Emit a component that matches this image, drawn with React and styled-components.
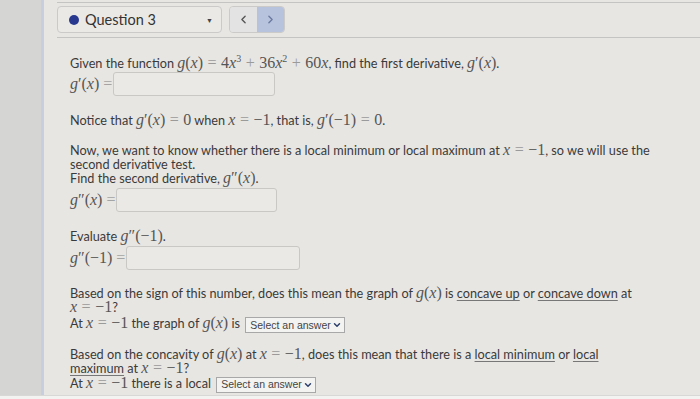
import React from "react";
import styled, { createGlobalStyle } from "styled-components";
import { ChevronDown, ChevronLeft, ChevronRight } from "lucide-react";

const GlobalStyle = createGlobalStyle`
  html, body {
    margin: 0;
    padding: 0;
  }
  body {
    font-family: Lato, "Open Sans", sans-serif;
    background: #f1f1f0;
  }
`;

const Screen = styled.div`
  width: 700px;
  height: 399px;
  display: flex;
  flex-direction: column;
  overflow: hidden;
`;

const Body = styled.div`
  height: 395px;
  display: flex;
`;

const BottomStrip = styled.div`
  flex: 1;
  background: #f3f3f2;
  border-top: 1px solid #d8d8d6;
`;

const Gutter = styled.div`
  width: 41px;
  background: #d5d5d3;
`;

const Divider = styled.div`
  width: 3px;
  background: #c7cedf;
`;

const Main = styled.div`
  flex: 1;
  background: #e8e6e2;
  padding-left: 13px;
`;

const Header = styled.div`
  margin-top: 2px;
  border-top: 1px solid #c4c4c2;
  border-bottom: 1px solid #c4c4c2;
  padding: 3px 0 4px;
  display: flex;
  gap: 7px;
`;

const QuestionBox = styled.div`
  width: 165px;
  height: 27px;
  box-sizing: border-box;
  border: 1px solid #cbcac8;
  border-radius: 4px;
  background: #ebe9e6;
  display: flex;
  align-items: center;
  padding: 0 8px 0 11px;
  color: #333;
  font-size: 14.5px;
`;

const Dot = styled.span`
  width: 10px;
  height: 10px;
  border-radius: 50%;
  background: #27388e;
  margin-right: 6px;
`;

const Caret = styled.span`
  margin-left: auto;
  font-size: 7px;
  color: #444;
`;

const NavGroup = styled.div`
  display: flex;
  height: 27px;
  box-sizing: border-box;
  border: 1px solid #cbcac8;
  border-radius: 4px;
  overflow: hidden;
`;

const NavButton = styled.div`
  width: 27px;
  display: flex;
  align-items: center;
  justify-content: center;
  background: ${(p) => (p.$active ? "#b7c2dc" : "#e3e3e4")};
  color: ${(p) => (p.$active ? "#6b7ba0" : "#555")};
`;

const Content = styled.div`
  padding-left: 13px;
  width: 580px;
  color: #3a3a3a;
  font-size: 12.7px;
`;

const Para = styled.p`
  margin: ${(p) => p.$top || 0}px 0 0;
  line-height: ${(p) => p.$lh || 14}px;
`;

const AtLine = styled.div`
  margin-top: ${(p) => p.$top ?? 1}px;
  line-height: 16px;
`;

const M = styled.span`
  font-family: "Liberation Serif", "DejaVu Serif", serif;
  font-size: 16px;
  line-height: 0;
  color: #555;
  white-space: nowrap;
`;

const Label = styled(M)`
  line-height: 24px;
`;

const I = styled.i`
  font-style: italic;
`;

const Sup = styled.sup`
  font-size: 10px;
  vertical-align: 6px;
  line-height: 0;
`;

const Op = styled.span`
  color: #9a9a9a;
  margin: 0 4.5px;
`;

const AnswerRow = styled.div`
  display: flex;
  align-items: center;
  margin-top: ${(p) => p.$top || 0}px;
  height: 24px;
`;

const Eq = styled.span`
  font-family: "Liberation Serif", serif;
  font-size: 16px;
  color: #a4a4a4;
  margin: 0 1px 0 4px;
`;

const AnswerBox = styled.div`
  width: ${(p) => p.$w}px;
  height: 24px;
  box-sizing: border-box;
  border: 1px solid #c9c8c5;
  border-radius: 3px;
  background: #ebe9e6;
`;

const Term = styled.span`
  text-decoration: underline;
  text-underline-offset: 2px;
  text-decoration-color: #777;
`;

const Select = styled.span`
  display: inline-flex;
  align-items: center;
  height: 16px;
  box-sizing: border-box;
  border: 1px solid #a8a8a8;
  background: #f3f3f2;
  padding: 0 2px 0 4px;
  font-family: "Liberation Sans", Arial, sans-serif;
  font-size: 10.5px;
  line-height: 1;
  color: #444;
  vertical-align: middle;
  margin-left: 2px;
  gap: 1px;
`;

const X = () => <I>x</I>;

const Gx = ({ p = "" }) => (
  <>
    <I>g</I>
    {p}(<X />)
  </>
);

const AtX = () => (
  <M>
    <X />
    <Op>=</Op>−1
  </M>
);

const Dropdown = () => (
  <Select>
    Select an answer
    <ChevronDown size={10} strokeWidth={3.5} color="#2c3e6a" />
  </Select>
);

export default function App() {
  return (
    <Screen>
      <GlobalStyle />
      <Body>
        <Gutter />
        <Divider />
        <Main>
          <Header>
            <QuestionBox>
              <Dot />
              Question 3
              <Caret>▼</Caret>
            </QuestionBox>
            <NavGroup>
              <NavButton>
                <ChevronLeft size={13} strokeWidth={2.5} />
              </NavButton>
              <NavButton $active>
                <ChevronRight size={13} strokeWidth={2.5} />
              </NavButton>
            </NavGroup>
          </Header>

          <Content>
            <Para $top={16} $lh={18}>
              Given the function{" "}
              <M>
                <Gx />
                <Op>=</Op>4<X />
                <Sup>3</Sup>
                <Op>+</Op>36<X />
                <Sup>2</Sup>
                <Op>+</Op>60<X />
              </M>
              , find the first derivative,{" "}
              <M>
                <Gx p="′" />
              </M>
              .
            </Para>
            <AnswerRow>
              <Label>
                <Gx p="′" />
              </Label>
              <Eq>=</Eq>
              <AnswerBox $w={162} />
            </AnswerRow>

            <Para $top={15} $lh={18}>
              Notice that{" "}
              <M>
                <Gx p="′" />
                <Op>=</Op>0
              </M>{" "}
              when <AtX />, that is,{" "}
              <M>
                <I>g</I>′(−1)<Op>=</Op>0
              </M>
              .
            </Para>

            <Para $top={14}>
              Now, we want to know whether there is a local minimum or local
              maximum at <AtX />, so we will use the second derivative test.
              <br />
              Find the second derivative,{" "}
              <M>
                <Gx p="″" />
              </M>
              .
            </Para>
            <AnswerRow $top={3}>
              <Label>
                <Gx p="″" />
              </Label>
              <Eq>=</Eq>
              <AnswerBox $w={161} />
            </AnswerRow>

            <Para $top={15} $lh={18}>
              Evaluate{" "}
              <M>
                <I>g</I>″(−1)
              </M>
              .
            </Para>
            <AnswerRow $top={1}>
              <Label>
                <I>g</I>″(−1)
              </Label>
              <Eq>=</Eq>
              <AnswerBox $w={174} />
            </AnswerRow>

            <Para $top={16}>
              Based on the sign of this number, does this mean the graph of{" "}
              <M>
                <Gx />
              </M>{" "}
              is <Term>concave up</Term> or <Term>concave down</Term> at{" "}
              <AtX />?
            </Para>
            <AtLine>
              At <AtX /> the graph of{" "}
              <M>
                <Gx />
              </M>{" "}
              is <Dropdown />
            </AtLine>

            <Para $top={14}>
              Based on the concavity of{" "}
              <M>
                <Gx />
              </M>{" "}
              at <AtX />, does this mean that there is a{" "}
              <Term>local minimum</Term> or <Term>local maximum</Term> at{" "}
              <AtX />?
            </Para>
            <AtLine $top={0}>
              At <AtX /> there is a local <Dropdown />
            </AtLine>
          </Content>
        </Main>
      </Body>
      <BottomStrip />
    </Screen>
  );
}
